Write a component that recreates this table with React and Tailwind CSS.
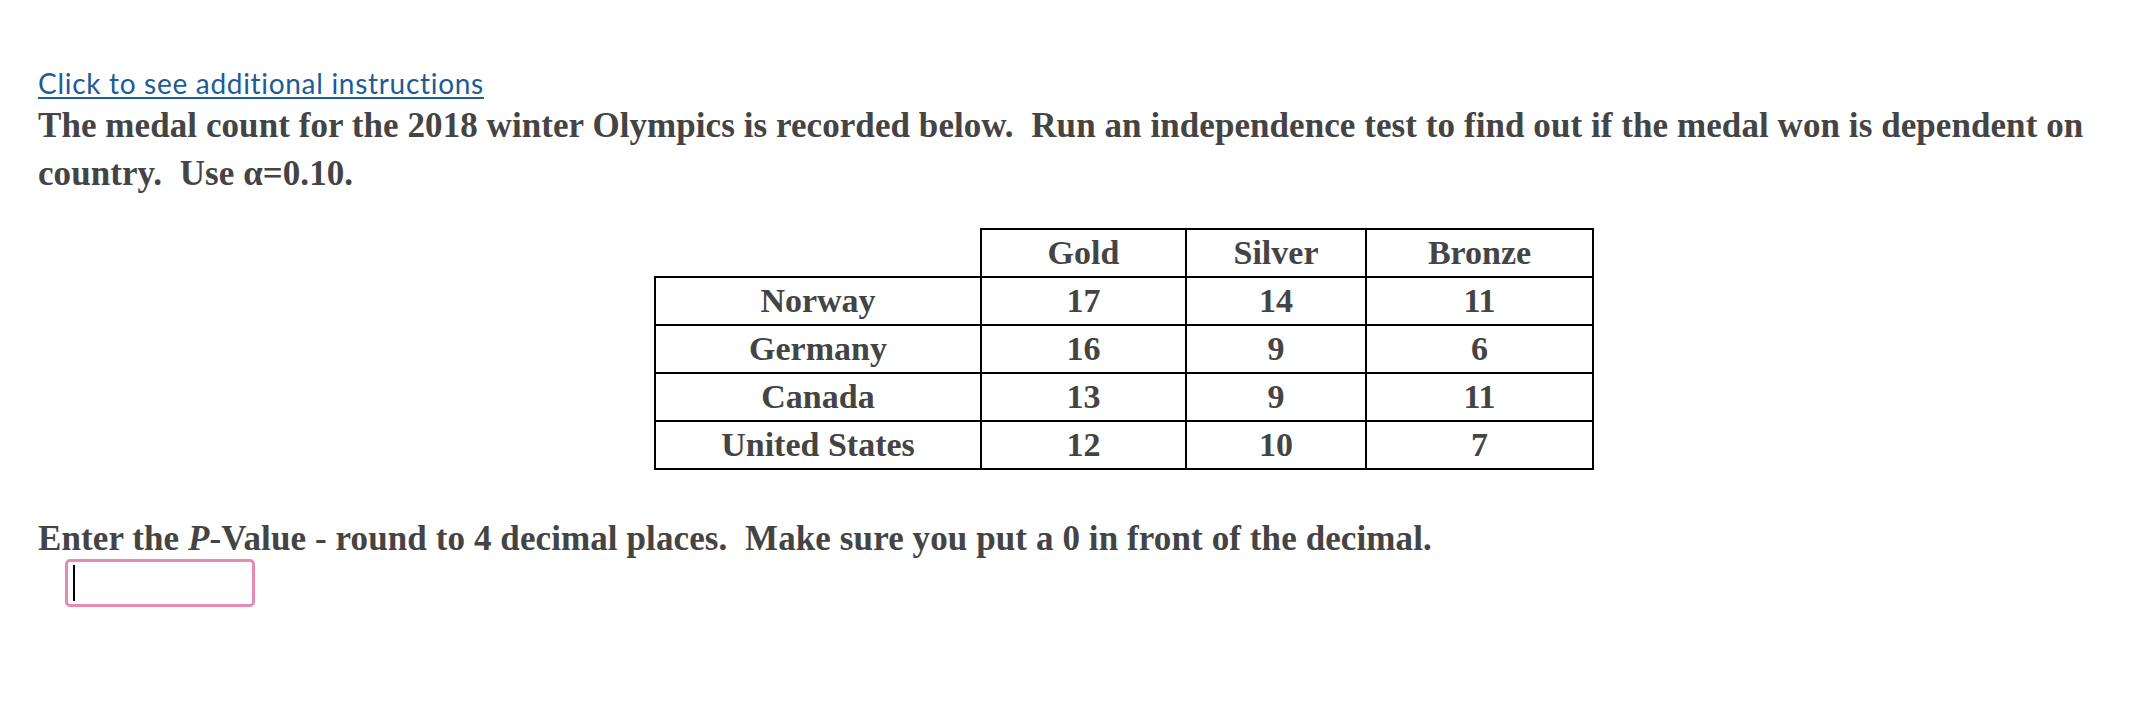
const rows = [
  ["Norway", 17, 14, 11],
  ["Germany", 16, 9, 6],
  ["Canada", 13, 9, 11],
  ["United States", 12, 10, 7],
];

const serif = "font-['Liberation_Serif','Times_New_Roman',serif]";

export default function App() {
  return (
    <div className="min-h-[714px] bg-white px-[38px] pt-[67px]">
      <a
        href="#"
        className="block w-fit font-['Lato',sans-serif] text-[28px] leading-[32px] tracking-[0.7px] text-[#1d5b99] underline decoration-[2px] underline-offset-[3px]"
      >
        Click to see additional instructions
      </a>
      <p className={`${serif} mt-[3px] text-[35px] font-bold leading-[48px] tracking-[0.07px] text-[#444444]`}>
        The medal count for the 2018 winter Olympics is recorded below.&nbsp; Run an
        independence test to find out if the medal won is dependent on country.&nbsp; Use
        α=0.10.
      </p>

      <table
        className={`${serif} ml-[616px] mt-[30px] border-collapse text-[34px] font-bold leading-[44px] text-[#444444]`}
      >
        <thead>
          <tr className="h-[48px]">
            <th className="w-[326px] p-0"></th>
            <th className="w-[205px] border-2 border-black p-0 font-bold">Gold</th>
            <th className="w-[180px] border-2 border-black p-0 font-bold">Silver</th>
            <th className="w-[227px] border-2 border-black p-0 font-bold">Bronze</th>
          </tr>
        </thead>
        <tbody>
          {rows.map((r) => (
            <tr key={r[0]} className="h-[48px]">
              {r.map((c, i) => (
                <td key={i} className="border-2 border-black p-0 text-center">
                  {c}
                </td>
              ))}
            </tr>
          ))}
        </tbody>
      </table>

      <p className={`${serif} mt-[49px] text-[35px] font-bold leading-[40px] tracking-[0.1px] text-[#444444]`}>
        Enter the <i>P</i>-Value - round to 4 decimal places.&nbsp; Make sure you put a 0 in
        front of the decimal.
      </p>
      <div className="relative ml-[27px] mt-0 w-[190px]">
        <input
          type="text"
          className="block h-[48px] w-[190px] rounded-[5px] border-[3px] border-[#e68ab4] px-2 outline-none"
        />
        <span className="pointer-events-none absolute left-[8px] top-[6px] h-[36px] w-[2px] bg-black"></span>
      </div>
    </div>
  );
}
